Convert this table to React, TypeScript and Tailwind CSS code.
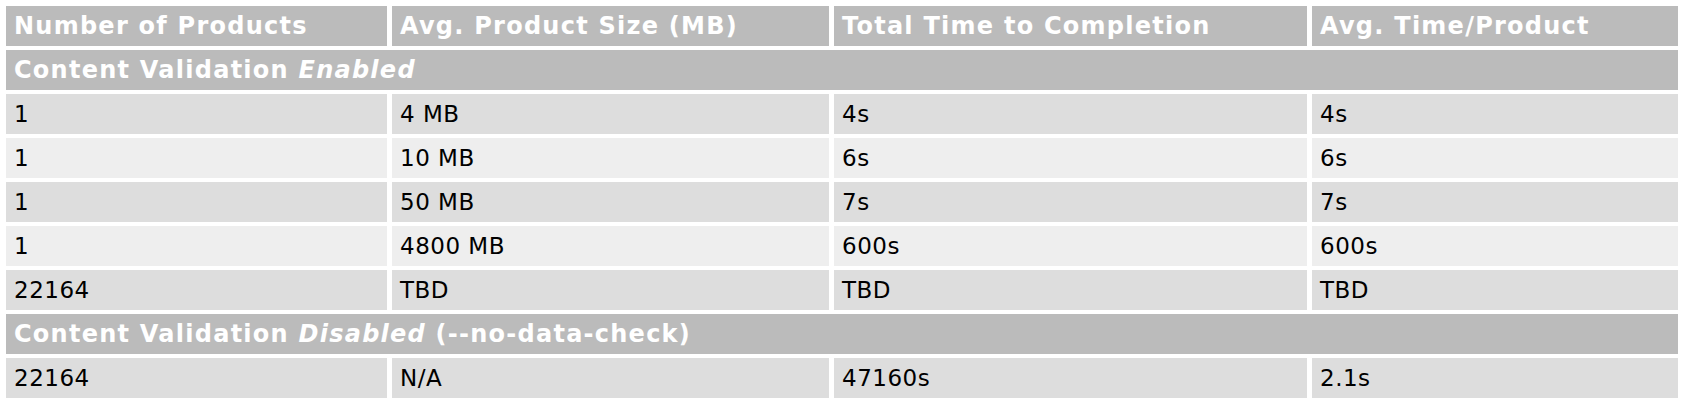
import React from "react";

const font = { fontFamily: '"DejaVu Sans", Verdana, sans-serif' };

const headers = ["Number of Products", "Avg. Product Size (MB)", "Total Time to Completion", "Avg. Time/Product"];

type Row = { cells: string[]; shade: "dark" | "light" };

const enabledRows: Row[] = [
  { cells: ["1", "4 MB", "4s", "4s"], shade: "dark" },
  { cells: ["1", "10 MB", "6s", "6s"], shade: "light" },
  { cells: ["1", "50 MB", "7s", "7s"], shade: "dark" },
  { cells: ["1", "4800 MB", "600s", "600s"], shade: "light" },
  { cells: ["22164", "TBD", "TBD", "TBD"], shade: "dark" },
];

const disabledRows: Row[] = [{ cells: ["22164", "N/A", "47160s", "2.1s"], shade: "dark" }];

function DataRow({ row }: { row: Row }) {
  return (
    <>
      {row.cells.map((c, i) => (
        <div
          key={i}
          className={`h-[40px] flex items-center pl-[8px] text-[23px] tracking-[0.5px] text-black ${
            row.shade === "dark" ? "bg-[#dddddd]" : "bg-[#eeeeee]"
          }`}
        >
          {c}
        </div>
      ))}
    </>
  );
}

export default function App() {
  return (
    <div className="bg-white w-[1686px] h-[408px] pt-[6px] pl-[6px]" style={font}>
      <div className="grid grid-cols-[381px_437px_473px_366px] gap-x-[5px] gap-y-[4px] w-[1672px]">
        {headers.map((h) => (
          <div
            key={h}
            className="h-[40px] flex items-center pl-[8px] bg-[#bbbbbb] text-white font-bold text-[24px] tracking-[1.25px]"
          >
            {h}
          </div>
        ))}
        <div className="col-span-4 h-[40px] flex items-center pl-[8px] bg-[#bbbbbb] text-white font-bold text-[24px] tracking-[1.25px]">
          <span>
            Content Validation <em className="italic">Enabled</em>
          </span>
        </div>
        {enabledRows.map((r, i) => (
          <DataRow key={i} row={r} />
        ))}
        <div className="col-span-4 h-[40px] flex items-center pl-[8px] bg-[#bbbbbb] text-white font-bold text-[24px] tracking-[1.25px]">
          <span>
            Content Validation <em className="italic">Disabled</em> (--no-data-check)
          </span>
        </div>
        {disabledRows.map((r, i) => (
          <DataRow key={i} row={r} />
        ))}
      </div>
    </div>
  );
}
